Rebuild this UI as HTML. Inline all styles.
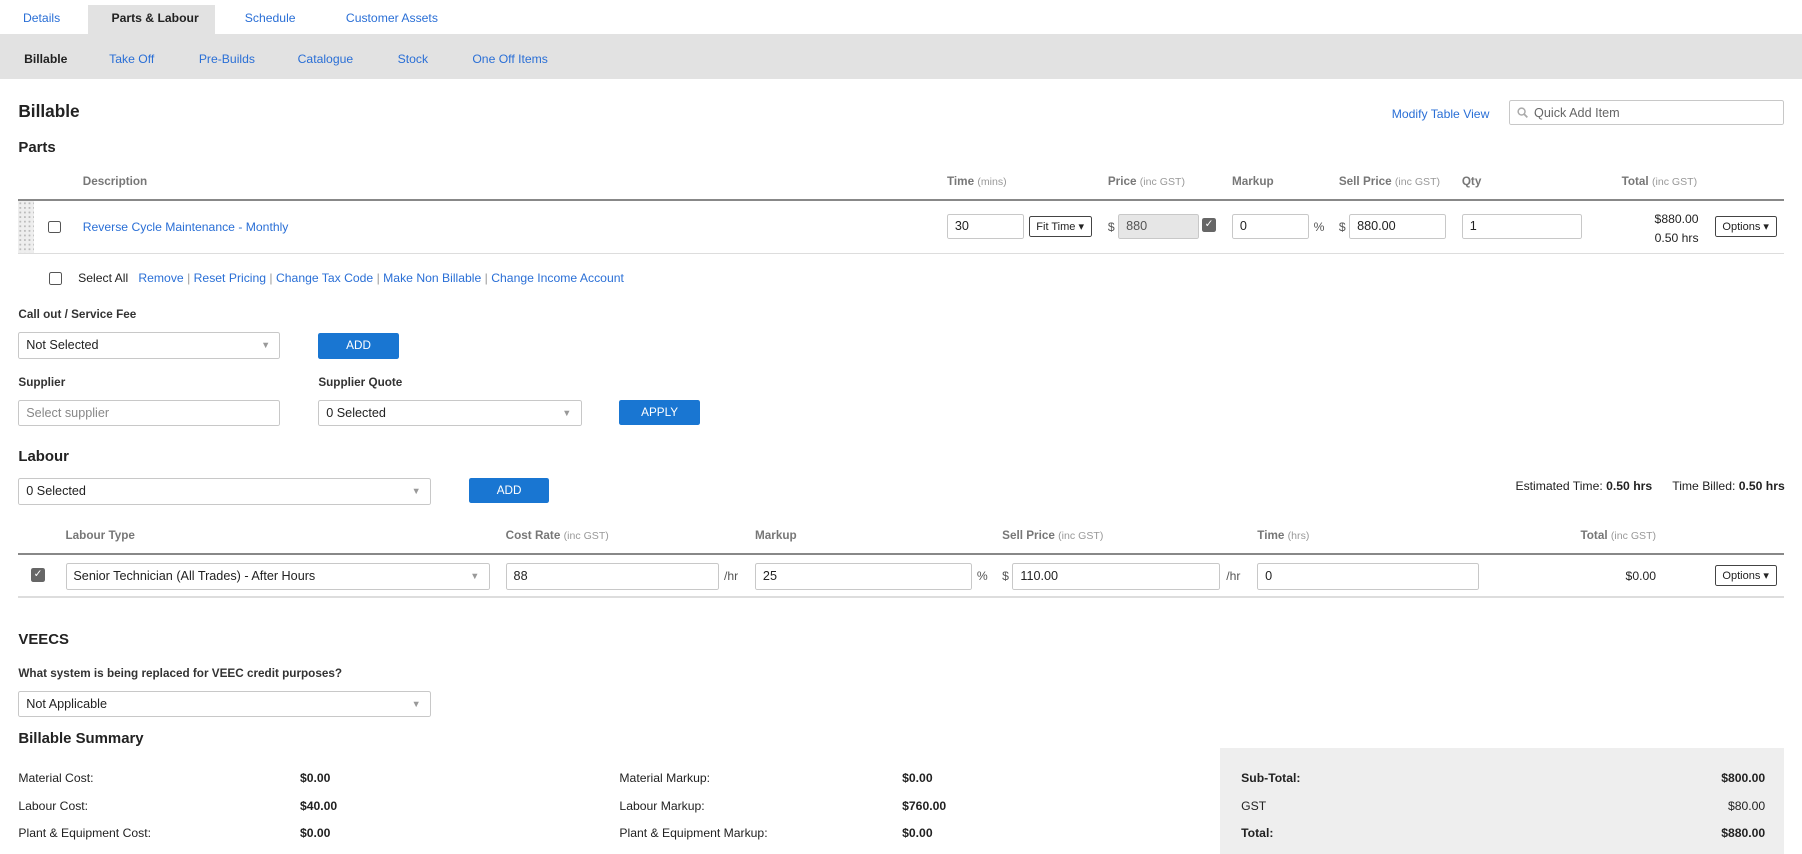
<!DOCTYPE html>
<html><head><meta charset="utf-8"><style>
html,body{margin:0;padding:0;background:#fff;}
body{width:1568px;height:743px;zoom:1.14923;overflow:hidden;position:relative;font-family:"Liberation Sans",Arial,sans-serif;font-size:10.6px;color:#222;}
.a{position:absolute;white-space:nowrap;}
.blue{color:#2a6fd6;}
.hdr{color:#777;font-weight:bold;font-size:10.2px;}
.hdr span{font-weight:normal;color:#999;font-size:9.2px;}
.inp{position:absolute;border:1px solid #c8c8c8;border-radius:2px;background:#fff;box-sizing:border-box;font-size:11px;padding-left:6px;display:flex;align-items:center;}
.sel:after{content:"▼";position:absolute;right:8px;font-size:8px;color:#999;}
.btn{position:absolute;background:#1976d2;color:#fff;border-radius:2px;font-size:10.2px;display:flex;align-items:center;justify-content:center;}
.opt{position:absolute;border:1px solid #444;border-radius:2px;font-size:9.6px;display:flex;align-items:center;justify-content:center;box-sizing:border-box;}
.cb{position:absolute;width:11px;height:11px;border:1px solid #555;border-radius:2px;box-sizing:border-box;background:#fff;}
.cbc{position:absolute;width:12px;height:12px;background:#666;border-radius:2px;color:#fff;font-size:9px;line-height:12px;text-align:center;}
.h2{font-size:13px;font-weight:bold;color:#222;}
.lbl{font-weight:bold;font-size:10.2px;color:#333;}
</style></head><body>
<div class="a" style="left:77px;top:4px;width:110px;height:27px;background:#e2e2e2;"></div>
<div class="a blue" style="left:20px;top:10px;">Details</div>
<div class="a" style="left:97px;top:10px;font-weight:bold;">Parts &amp; Labour</div>
<div class="a blue" style="left:213px;top:10px;">Schedule</div>
<div class="a blue" style="left:301px;top:10px;">Customer Assets</div>
<div class="a" style="left:0;top:30px;width:1568px;height:39px;background:#e2e2e2;"></div>
<div class="a" style="left:21px;top:45px;font-weight:bold;">Billable</div>
<div class="a blue" style="left:95px;top:45px;">Take Off</div>
<div class="a blue" style="left:173px;top:45px;">Pre-Builds</div>
<div class="a blue" style="left:259px;top:45px;">Catalogue</div>
<div class="a blue" style="left:346px;top:45px;">Stock</div>
<div class="a blue" style="left:411px;top:45px;">One Off Items</div>

<div class="a" style="left:16px;top:88px;font-size:15px;font-weight:bold;">Billable</div>
<div class="a blue" style="left:1211px;top:93px;">Modify Table View</div>
<div class="inp" style="left:1313px;top:87px;width:239px;height:22px;color:#666;padding-left:6px;"><svg width="10" height="10" viewBox="0 0 10 10" style="margin-right:5px"><circle cx="4" cy="4" r="3" fill="none" stroke="#aaa" stroke-width="1.3"/><path d="M6 6L9 9" stroke="#aaa" stroke-width="1.5"/></svg>Quick Add Item</div>
<div class="a h2" style="left:16px;top:121px;">Parts</div>

<div class="a hdr" style="left:72px;top:152px;">Description</div>
<div class="a hdr" style="left:824px;top:152px;">Time <span>(mins)</span></div>
<div class="a hdr" style="left:964px;top:152px;">Price <span>(inc GST)</span></div>
<div class="a hdr" style="left:1072px;top:152px;">Markup</div>
<div class="a hdr" style="left:1165px;top:152px;">Sell Price <span>(inc GST)</span></div>
<div class="a hdr" style="left:1272px;top:152px;">Qty</div>
<div class="a hdr" style="left:1411px;top:152px;">Total <span>(inc GST)</span></div>
<div class="a" style="left:16px;top:173px;width:1536px;height:2px;background:#888;"></div>
<div class="a" style="left:16px;top:175px;width:14px;height:45px;background:#eee;background-image:radial-gradient(#bbb 0.8px,transparent 1px);background-size:4px 4px;"></div>
<div class="cb" style="left:42px;top:192px;"></div>
<div class="a blue" style="left:72px;top:191px;">Reverse Cycle Maintenance - Monthly</div>
<div class="inp" style="left:824px;top:186px;width:67px;height:22px;">30</div>
<div class="opt" style="left:895px;top:188px;width:55px;height:18px;">Fit Time ▾</div>
<div class="a" style="left:964px;top:191px;color:#555;">$</div>
<div class="inp" style="left:973px;top:186px;width:70px;height:22px;background:#e6e6e6;color:#555;">880</div>
<div class="cbc" style="left:1046px;top:190px;">✓</div>
<div class="inp" style="left:1072px;top:186px;width:67px;height:22px;">0</div>
<div class="a" style="left:1143px;top:191px;color:#555;">%</div>
<div class="a" style="left:1165px;top:191px;color:#555;">$</div>
<div class="inp" style="left:1174px;top:186px;width:84px;height:22px;">880.00</div>
<div class="inp" style="left:1272px;top:186px;width:105px;height:22px;">1</div>
<div class="a" style="left:1420px;top:183px;width:58px;text-align:right;line-height:16px;">$880.00<br>0.50 hrs</div>
<div class="opt" style="left:1492px;top:188px;width:54px;height:18px;">Options ▾</div>
<div class="a" style="left:16px;top:220px;width:1536px;height:1px;background:#ddd;"></div>

<div class="cb" style="left:43px;top:237px;"></div>
<div class="a" style="left:68px;top:236px;">Select All &nbsp;&nbsp;<span class="blue">Remove</span> <span style="color:#999">|</span> <span class="blue">Reset Pricing</span> <span style="color:#999">|</span> <span class="blue">Change Tax Code</span> <span style="color:#999">|</span> <span class="blue">Make Non Billable</span> <span style="color:#999">|</span> <span class="blue">Change Income Account</span></div>

<div class="a lbl" style="left:16px;top:268px;">Call out / Service Fee</div>
<div class="inp sel" style="left:16px;top:289px;width:228px;height:23px;">Not Selected</div>
<div class="btn" style="left:277px;top:290px;width:70px;height:22px;">ADD</div>
<div class="a lbl" style="left:16px;top:327px;">Supplier</div>
<div class="a lbl" style="left:277px;top:327px;">Supplier Quote</div>
<div class="inp" style="left:16px;top:348px;width:228px;height:23px;color:#888;">Select supplier</div>
<div class="inp sel" style="left:277px;top:348px;width:229px;height:23px;">0 Selected</div>
<div class="btn" style="left:539px;top:348px;width:70px;height:22px;">APPLY</div>

<div class="a h2" style="left:16px;top:390px;">Labour</div>
<div class="inp sel" style="left:16px;top:416px;width:359px;height:23px;">0 Selected</div>
<div class="btn" style="left:408px;top:416px;width:70px;height:22px;">ADD</div>
<div class="a" style="right:15px;top:417px;">Estimated Time: <b>0.50 hrs</b> &nbsp;&nbsp;&nbsp;&nbsp; Time Billed: <b>0.50 hrs</b></div>

<div class="a hdr" style="left:57px;top:460px;">Labour Type</div>
<div class="a hdr" style="left:440px;top:460px;">Cost Rate <span>(inc GST)</span></div>
<div class="a hdr" style="left:657px;top:460px;">Markup</div>
<div class="a hdr" style="left:872px;top:460px;">Sell Price <span>(inc GST)</span></div>
<div class="a hdr" style="left:1094px;top:460px;">Time <span>(hrs)</span></div>
<div class="a hdr" style="right:127px;top:460px;">Total <span>(inc GST)</span></div>
<div class="a" style="left:16px;top:481px;width:1536px;height:2px;background:#888;"></div>
<div class="cbc" style="left:27px;top:494px;">✓</div>
<div class="inp sel" style="left:57px;top:490px;width:369px;height:23px;">Senior Technician (All Trades) - After Hours</div>
<div class="inp" style="left:440px;top:490px;width:186px;height:23px;">88</div>
<div class="a" style="left:630px;top:495px;color:#555;">/hr</div>
<div class="inp" style="left:657px;top:490px;width:189px;height:23px;">25</div>
<div class="a" style="left:850px;top:495px;color:#555;">%</div>
<div class="a" style="left:872px;top:495px;color:#555;">$</div>
<div class="inp" style="left:881px;top:490px;width:181px;height:23px;">110.00</div>
<div class="a" style="left:1067px;top:495px;color:#555;">/hr</div>
<div class="inp" style="left:1094px;top:490px;width:193px;height:23px;">0</div>
<div class="a" style="left:1380px;top:495px;width:61px;text-align:right;">$0.00</div>
<div class="opt" style="left:1492px;top:492px;width:54px;height:18px;">Options ▾</div>
<div class="a" style="left:16px;top:519px;width:1536px;height:1px;background:#ddd;"></div>

<div class="a h2" style="left:16px;top:549px;">VEECS</div>
<div class="a lbl" style="left:16px;top:580px;">What system is being replaced for VEEC credit purposes?</div>
<div class="inp sel" style="left:16px;top:601px;width:359px;height:23px;">Not Applicable</div>
<div class="a h2" style="left:16px;top:635px;">Billable Summary</div>

<div class="a" style="left:1062px;top:651px;width:490px;height:92px;background:#eee;"></div>
<div class="a" style="left:16px;top:671px;">Material Cost:</div>
<div class="a" style="left:261px;top:671px;font-weight:bold;">$0.00</div>
<div class="a" style="left:539px;top:671px;">Material Markup:</div>
<div class="a" style="left:785px;top:671px;font-weight:bold;">$0.00</div>
<div class="a" style="left:1080px;top:671px;font-weight:bold;">Sub-Total:</div>
<div class="a" style="left:1436px;top:671px;width:100px;text-align:right;font-weight:bold;">$800.00</div>
<div class="a" style="left:16px;top:695px;">Labour Cost:</div>
<div class="a" style="left:261px;top:695px;font-weight:bold;">$40.00</div>
<div class="a" style="left:539px;top:695px;">Labour Markup:</div>
<div class="a" style="left:785px;top:695px;font-weight:bold;">$760.00</div>
<div class="a" style="left:1080px;top:695px;">GST</div>
<div class="a" style="left:1436px;top:695px;width:100px;text-align:right;">$80.00</div>
<div class="a" style="left:16px;top:719px;">Plant &amp; Equipment Cost:</div>
<div class="a" style="left:261px;top:719px;font-weight:bold;">$0.00</div>
<div class="a" style="left:539px;top:719px;">Plant &amp; Equipment Markup:</div>
<div class="a" style="left:785px;top:719px;font-weight:bold;">$0.00</div>
<div class="a" style="left:1080px;top:719px;font-weight:bold;">Total:</div>
<div class="a" style="left:1436px;top:719px;width:100px;text-align:right;font-weight:bold;">$880.00</div>
</body></html>
